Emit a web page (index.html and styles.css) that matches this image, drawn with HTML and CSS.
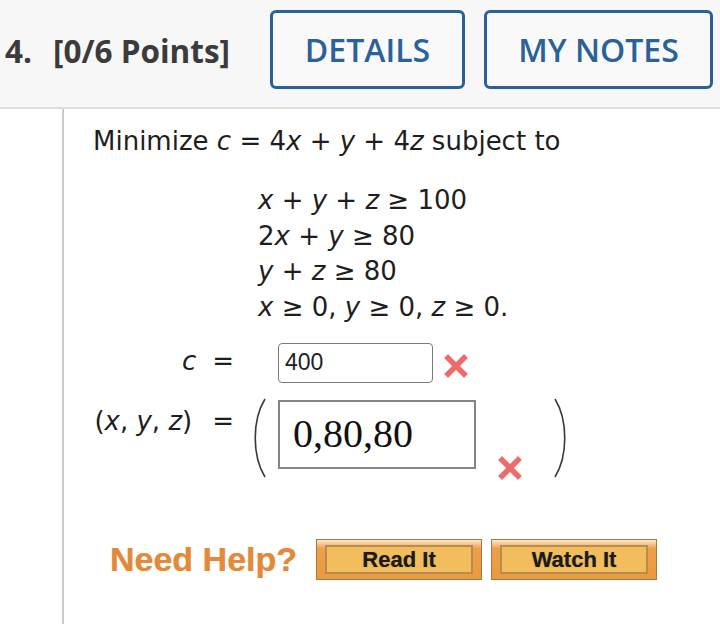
FILE: index.html
```html
<!DOCTYPE html>
<html lang="en">
<head>
<meta charset="utf-8">
<title>Question 4</title>
<link rel="stylesheet" href="styles.css">
</head>
<body>
<header class="q-header">
  <div class="q-title"><span class="q-num">4.</span><span class="q-points">[0/6 Points]</span></div>
  <button class="hdr-btn btn-details">DETAILS</button>
  <button class="hdr-btn btn-notes">MY NOTES</button>
</header>
<main class="q-body">
  <p class="prompt">Minimize <i>c</i> = 4<i>x</i> + <i>y</i> + 4<i>z</i> subject to</p>
  <div class="constraints">
    <div><i>x</i> + <i>y</i> + <i>z</i> ≥ 100</div>
    <div>2<i>x</i> + <i>y</i> ≥ 80</div>
    <div><i>y</i> + <i>z</i> ≥ 80</div>
    <div><i>x</i> ≥ 0, <i>y</i> ≥ 0, <i>z</i> ≥ 0.</div>
  </div>
  <div class="ans-row row-c">
    <div class="label label-c"><span><i>c</i></span><span>=</span></div>
    <div class="paren-cell"></div>
    <div class="input input-c">400</div>
    <svg class="xmark xmark-c" viewBox="0 0 28 28" width="28" height="28"><path d="M6 6 L22 22 M22 6 L6 22" /></svg>
  </div>
  <div class="ans-row row-xyz">
    <div class="label label-xyz"><span>(<i>x</i>, <i>y</i>, <i>z</i>)</span><span>=</span></div>
    <div class="paren-cell"><svg class="paren" viewBox="0 0 14 80" width="14" height="80"><path d="M12 1 C -1 22, -1 58, 12 79" /></svg></div>
    <div class="input input-xyz">0,80,80</div>
    <svg class="xmark xmark-xyz" viewBox="0 0 28 28" width="28" height="28"><path d="M6 6 L22 22 M22 6 L6 22" /></svg>
    <svg class="paren paren-r" viewBox="0 0 14 80" width="14" height="80"><path d="M2 1 C 15 22, 15 58, 2 79" /></svg>
  </div>
  <div class="help-row">
    <span class="need-help">Need Help?</span>
    <button class="help-btn"><span class="help-inner">Read It</span></button>
    <button class="help-btn"><span class="help-inner">Watch It</span></button>
  </div>
</main>
</body>
</html>
```
FILE: styles.css
```css
html, body {
  margin: 0;
  padding: 0;
  background: #ffffff;
}
body {
  width: 720px;
  height: 624px;
  overflow: hidden;
}
.q-header {
  display: flex;
  align-items: flex-start;
  height: 97px;
  padding-top: 10px;
  background: #f7f7f7;
  border-bottom: 2px solid #dedede;
  padding-left: 5px;
  box-sizing: content-box;
}
.q-title {
  font-family: "Open Sans", sans-serif;
  font-weight: 700;
  font-size: 31.5px;
  color: #3b3b3b;
  display: flex;
  gap: 21px;
  margin-top: 19px;
  margin-right: 40px;
}
.hdr-btn {
  height: 79px;
  border: 3px solid #2a6198;
  border-radius: 6px;
  background: #f9f9f9;
  color: #2a6198;
  font-family: "Open Sans", sans-serif;
  font-weight: 600;
  font-size: 32px;
  padding: 0;
  margin: 0;
  flex: none;
}
.btn-details { width: 195px; margin-right: 19px; }
.btn-notes { width: 229px; }

.q-body {
  margin-left: 62px;
  border-left: 2px solid #cacaca;
  padding-left: 29px;
  height: 515px;
  font-family: "DejaVu Sans", Verdana, sans-serif;
  font-size: 26px;
  color: #1e1e1e;
}
.q-body i { font-style: oblique; }
.prompt {
  margin: 0;
  padding-top: 17px;
  line-height: 30px;
}
.constraints {
  margin-top: 27px;
  padding-left: 165px;
  line-height: 35.5px;
}
.ans-row {
  display: flex;
  align-items: flex-start;
}
.label {
  width: 141px;
  display: flex;
  justify-content: flex-end;
  gap: 20px;
  flex: none;
}
.label-c { gap: 16px; }
.paren-cell {
  width: 44px;
  flex: none;
}
.row-c {
  margin-top: 18px;
  height: 40px;
}
.row-c .label { line-height: 36px; }
.input {
  box-sizing: border-box;
  background: #fff;
  flex: none;
}
.input-c {
  width: 155px;
  height: 40px;
  border: 1.5px solid #7b7b7b;
  border-radius: 4px;
  font-family: "Liberation Sans", Arial, sans-serif;
  font-size: 23px;
  line-height: 37px;
  padding-left: 6px;
  color: #222;
}
.xmark {
  flex: none;
}
.xmark path {
  stroke: #ec6b6b;
  stroke-width: 5.5;
  stroke-linecap: square;
  fill: none;
}
.xmark-c { margin-left: 9px; margin-top: 9px; }
.row-xyz {
  margin-top: 15px;
  height: 84px;
}
.label-xyz {
  margin-top: 8px;
  line-height: 30px;
}
.paren {
  display: block;
  flex: none;
}
.paren path {
  fill: none;
  stroke: #3a3a3a;
  stroke-width: 1.6;
}
.paren-cell .paren { margin-left: 19px; }
.input-xyz {
  margin-top: 2px;
  width: 198px;
  height: 69px;
  border: 2px solid #858585;
  font-family: "Liberation Serif", "Times New Roman", serif;
  font-size: 40px;
  line-height: 64px;
  padding-left: 13px;
  color: #111;
}
.xmark-xyz { margin-left: 20px; margin-top: 56px; }
.paren-r { margin-left: 29px; }

.help-row {
  display: flex;
  align-items: center;
  margin-top: 57px;
  padding-left: 17px;
}
.need-help {
  font-family: "Liberation Sans", Arial, sans-serif;
  font-weight: 700;
  font-size: 34px;
  color: #e2893a;
  line-height: 41px;
  margin-right: 19px;
  text-shadow: 0 0 1px rgba(226, 137, 58, 0.6);
}
.help-btn {
  box-sizing: border-box;
  width: 166px;
  height: 41px;
  padding: 5px 8px;
  margin: 0 9px 0 0;
  border: 1px solid #a9773f;
  background: linear-gradient(#fbe6c8 0%, #eda04a 22%, #e99a3e 100%);
  display: flex;
  flex: none;
}
.help-inner {
  flex: 1;
  display: flex;
  align-items: center;
  justify-content: center;
  border: 2px solid #b98b52;
  background: #f2bd5c;
  font-family: "Liberation Sans", Arial, sans-serif;
  font-weight: 700;
  font-size: 22px;
  color: #1a1a1a;
  text-shadow: 0 0 1px rgba(0, 0, 0, 0.4);
}
```
